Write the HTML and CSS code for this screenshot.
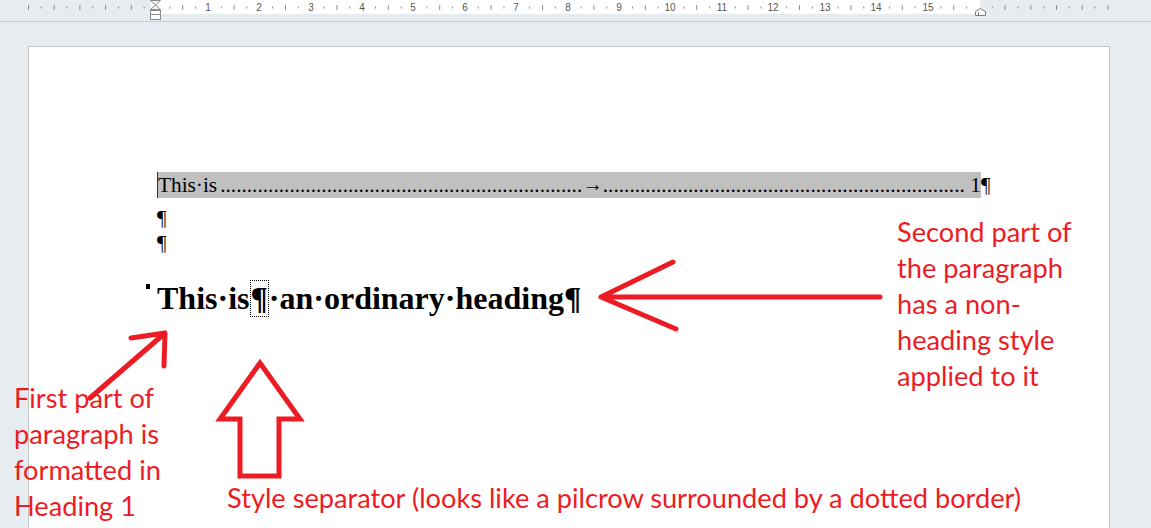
FILE: index.html
```html
<!DOCTYPE html>
<html lang="en">
<head>
  <meta charset="UTF-8">
  <title>Style separator</title>
  <link rel="stylesheet" href="styles.css">
</head>
<body>
  <div class="ruler">
    <svg width="1151" height="21" viewBox="0 0 1151 21">
      <defs>
        <pattern id="ticks-out" patternUnits="userSpaceOnUse" x="156.5" y="0" width="51.4" height="21">
          <rect x="0" y="5" width="1" height="5" fill="#8c8c8c"/>
          <rect x="12.85" y="6.5" width="1" height="2" fill="#8c8c8c"/>
          <rect x="25.7" y="5" width="1" height="5" fill="#8c8c8c"/>
          <rect x="38.55" y="6.5" width="1" height="2" fill="#8c8c8c"/>
        </pattern>
        <pattern id="ticks-in" patternUnits="userSpaceOnUse" x="156.5" y="0" width="51.4" height="21">
          <rect x="12.85" y="6.5" width="1" height="2" fill="#8c8c8c"/>
          <rect x="25.7" y="5" width="1" height="5" fill="#8c8c8c"/>
          <rect x="38.55" y="6.5" width="1" height="2" fill="#8c8c8c"/>
        </pattern>
      </defs>
      <rect x="151" y="0" width="829" height="14" fill="#fff"/>
      <rect x="24" y="0" width="126" height="14" fill="url(#ticks-out)"/>
      <rect x="162" y="0" width="812" height="14" fill="url(#ticks-in)"/>
      <rect x="988" y="0" width="124" height="14" fill="url(#ticks-out)"/>
      <g class="ruler-num" text-anchor="middle">
        <text x="208" y="10.5">1</text>
        <text x="259" y="10.5">2</text>
        <text x="311" y="10.5">3</text>
        <text x="362" y="10.5">4</text>
        <text x="413" y="10.5">5</text>
        <text x="465" y="10.5">6</text>
        <text x="516" y="10.5">7</text>
        <text x="568" y="10.5">8</text>
        <text x="619" y="10.5">9</text>
        <text x="670" y="10.5">10</text>
        <text x="722" y="10.5">11</text>
        <text x="773" y="10.5">12</text>
        <text x="825" y="10.5">13</text>
        <text x="876" y="10.5">14</text>
        <text x="928" y="10.5">15</text>
      </g>
      <path d="M150.5 0.5 L160.5 0.5 L155.5 5 L160.5 9.5 L150.5 9.5 L155.5 5 Z" fill="#f4f4f4" stroke="#8a8a8a"/>
      <rect x="150.5" y="10.5" width="10" height="9" fill="#fff" stroke="#8a8a8a"/>
      <line x1="150.5" y1="14.5" x2="160.5" y2="14.5" stroke="#8a8a8a"/>
      <path d="M975.5 15.5 L975.5 11.5 L980.5 8.5 L985.5 11.5 L985.5 15.5 Z" fill="#fff" stroke="#7a7a7a"/>
      <line x1="978.5" y1="12" x2="978.5" y2="15" stroke="#7a7a7a"/>
    </svg>
  </div>

  <div class="workspace">
    <div class="page">
      <div class="doc">
        <p class="toc"><span class="field">This·is<span class="leader first">................................................................................................</span><span class="tab">→</span><span class="leader">................................................................................................</span><span class="page-num">1</span></span>¶</p>
        <p class="mark">¶</p>
        <p class="mark">¶</p>
        <h1 class="heading">This·is<span class="sep">¶</span>·an·ordinary·heading¶</h1>
      </div>
    </div>
  </div>

  <svg class="arrows" width="1151" height="528" viewBox="0 0 1151 528">
    <g fill="none" stroke="#ed1c24" stroke-width="5" stroke-linecap="round" stroke-linejoin="round">
      <path d="M880 297 L601 297 M673 262 L601 297 L676 329"/>
      <path d="M90 398 L165 333 M131 338 L165 333 L164 366"/>
      <path d="M260 363 L220 419 L240 419 L240 476 L279 476 L279 419 L300 419 Z" stroke-linejoin="miter"/>
    </g>
  </svg>

  <p class="note note-right">Second part of<br>the paragraph<br>has a non-<br>heading style<br>applied to it</p>
  <p class="note note-left">First part of<br>paragraph is<br>formatted in<br>Heading 1</p>
  <p class="note note-bottom">Style separator (looks like a pilcrow surrounded by a dotted border)</p>
</body>
</html>
```

FILE: styles.css
```css
body {
  margin: 0;
  width: 1151px;
  height: 528px;
  overflow: hidden;
  position: relative;
  background-color: #e6ecef;
  font-family: "Liberation Serif", "Times New Roman", serif;
  color: #000;
}

.ruler {
  height: 21px;
  border-bottom: 1px solid #c9ced2;
}

.ruler svg {
  display: block;
}

.ruler-num {
  font-family: "Liberation Sans", Arial, sans-serif;
  font-size: 10px;
  fill: #555;
}

.workspace {
  padding: 24px 0 0 28px;
}

.page {
  width: 1080px;
  height: 500px;
  background-color: #fff;
  border: 1px solid #c6c6c6;
  border-bottom: none;
}

.doc {
  padding: 125px 0 0 128px;
  width: 840px;
}

.toc {
  display: flex;
  margin: 0 0 8px;
  font-size: 21.3px;
  line-height: 26px;
  white-space: nowrap;
}

.field {
  display: flex;
  width: 823px;
  background-color: #c0c0c0;
  border-left: 1px solid #333;
}

.leader {
  flex: 1;
  overflow: hidden;
}

.leader.first {
  padding-left: 3px;
}

.tab {
  font-size: 20px;
  line-height: 24px;
}

.page-num {
  padding-left: 5px;
}

.mark {
  margin: 0;
  font-size: 21.3px;
  line-height: 25px;
}

.heading {
  position: relative;
  margin: 22px 0 0;
  font-size: 32px;
  line-height: 40px;
  font-weight: bold;
  white-space: nowrap;
}

.heading::before {
  content: "";
  position: absolute;
  left: -11px;
  top: 6px;
  width: 4px;
  height: 5px;
  background-color: #000;
}

.sep {
  display: inline-block;
  line-height: 35px;
  border: 1px dotted #000;
}

.arrows {
  position: absolute;
  left: 0;
  top: 0;
  pointer-events: none;
}

.note {
  position: absolute;
  margin: 0;
  color: #ed1c24;
  font-family: Lato, "Open Sans", sans-serif;
  font-size: 27.2px;
  line-height: 36px;
  white-space: nowrap;
}

.note-right {
  left: 897px;
  top: 214px;
}

.note-left {
  left: 14px;
  top: 380px;
}

.note-bottom {
  left: 227px;
  top: 480px;
}
```
